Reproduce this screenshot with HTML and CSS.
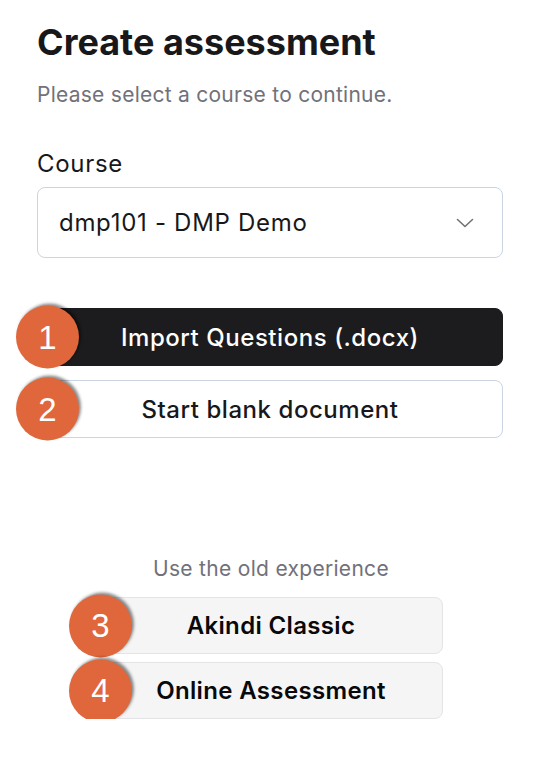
FILE: index.html
```html
<!DOCTYPE html>
<html lang="en">
<head>
  <meta charset="UTF-8" />
  <title>Create assessment</title>
  <link rel="stylesheet" href="styles.css">
</head>
<body>
  <div class="page">
    <h1 class="title">Create assessment</h1>
    <p class="subtitle">Please select a course to continue.</p>

    <label class="field-label">Course</label>
    <div class="select">
      <span>dmp101 - DMP Demo</span>
      <svg class="chevron" width="18" height="10" viewBox="0 0 18 10" fill="none">
        <path d="M1.5 1.5 L9 8.5 L16.5 1.5" stroke="#71717a" stroke-width="1.6" stroke-linecap="round" stroke-linejoin="round"/>
      </svg>
    </div>

    <div class="actions">
      <div class="step">
        <button class="btn btn-dark">Import Questions (.docx)</button>
        <span class="badge">1</span>
      </div>
      <div class="step">
        <button class="btn btn-outline">Start blank document</button>
        <span class="badge">2</span>
      </div>
    </div>

    <div class="legacy">
      <div class="legacy-label">Use the old experience</div>
      <div class="step">
        <button class="btn btn-light">Akindi Classic</button>
        <span class="badge">3</span>
      </div>
      <div class="step">
        <button class="btn btn-light">Online Assessment</button>
        <span class="badge">4</span>
      </div>
    </div>
  </div>
</body>
</html>
```

FILE: styles.css
```css
html, body {
  margin: 0; padding: 0;
  background: white; color: #18181b;
  font-family: Inter, "Noto Sans", sans-serif;
  font-optical-sizing: none;
}
.page { padding: 20px 33px 0 37px; }

.title { margin: 0; font-size: 36px; font-weight: 700; line-height: 44px; }
.subtitle { margin: 17px 0 0; font-size: 21px; line-height: 28px; color: #71717a; letter-spacing: 0.26px; }

.field-label { display: block; margin-top: 40px; font-size: 24px; line-height: 30px; letter-spacing: 0.7px; }
.select {
  margin-top: 8px; height: 71px; box-sizing: border-box;
  display: flex; align-items: center; justify-content: space-between;
  padding: 0 28px 0 21px;
  border: 1px solid #cbd5e1; border-radius: 8px;
  font-size: 24px; letter-spacing: 0.7px;
}

.actions { margin-top: 50px; display: flex; flex-direction: column; gap: 14px; }
.step { position: relative; }
.btn {
  width: 100%; height: 58px; display: block;
  font-family: inherit; font-size: 24px; font-weight: 500; letter-spacing: 0.55px;
  border-radius: 8px; cursor: pointer;
}
.btn-dark { background: #1c1c1e; color: white; border: 1px solid #1c1c1e; }
.btn-outline { background: white; color: #18181b; border: 1px solid #cbd5e1; }

.badge {
  position: absolute; left: -21px; top: 50%; transform: translateY(-50%);
  width: 63px; height: 63px; border-radius: 50%;
  background: #e0663b; color: white;
  display: flex; align-items: center; justify-content: center;
  font-family: "Liberation Sans", Arial, sans-serif; font-size: 33px; letter-spacing: 0;
  box-shadow: 2px -2px 3px rgba(0,0,0,0.45);
}

.legacy {
  margin: 117px 0 0 62px; width: 344px;
  display: flex; flex-direction: column; gap: 8px;
}
.legacy-label { text-align: center; font-size: 21px; line-height: 28px; color: #71717a; margin-bottom: 6px; letter-spacing: 0.3px; }
.btn-light {
  height: 57px; background: #f5f5f5; color: #09090b;
  border: 1px solid #e4e4e7; font-weight: 600; letter-spacing: 0.35px;
}
.legacy .badge { left: -30px; }
```
